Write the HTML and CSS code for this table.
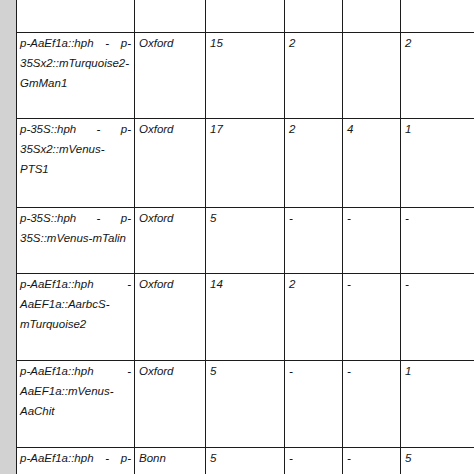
FILE: index.html
```html
<!DOCTYPE html>
<html>
<head>
<meta charset="utf-8">
<link rel="stylesheet" href="styles.css">
</head>
<body>
<div class="sheet">
  <div class="strip"></div>

  <div class="cell"></div><div class="cell"></div><div class="cell"></div><div class="cell"></div><div class="cell"></div><div class="cell"></div>

  <div class="cell name">p-AaEf1a::hph - p-35Sx2::mTurquoise2-GmMan1</div>
  <div class="cell">Oxford</div><div class="cell">15</div><div class="cell">2</div><div class="cell"></div><div class="cell">2</div>

  <div class="cell name">p-35S::hph - p-35Sx2::mVenus-PTS1</div>
  <div class="cell">Oxford</div><div class="cell">17</div><div class="cell">2</div><div class="cell">4</div><div class="cell">1</div>

  <div class="cell name">p-35S::hph - p-35S::mVenus-mTalin</div>
  <div class="cell">Oxford</div><div class="cell">5</div><div class="cell">-</div><div class="cell">-</div><div class="cell">-</div>

  <div class="cell name">p-AaEf1a::hph - AaEF1a::AarbcS-mTurquoise2</div>
  <div class="cell">Oxford</div><div class="cell">14</div><div class="cell">2</div><div class="cell">-</div><div class="cell">-</div>

  <div class="cell name">p-AaEf1a::hph - AaEF1a::mVenus-AaChit</div>
  <div class="cell">Oxford</div><div class="cell">5</div><div class="cell">-</div><div class="cell">-</div><div class="cell">1</div>

  <div class="cell name">p-AaEf1a::hph - p-35Sx2::mVenus-GmMan1</div>
  <div class="cell">Bonn</div><div class="cell">5</div><div class="cell">-</div><div class="cell">-</div><div class="cell">5</div>
</div>
</body>
</html>
```

FILE: styles.css
```css
html, body {
  margin: 0;
  padding: 0;
  background: #ffffff;
  overflow: hidden;
}

.sheet {
  display: grid;
  grid-template-columns: 16px 117px 70px 78px 57px 57px 100px;
  grid-template-rows: 32px 85px 88px 65px 86px 86px 60px;
  gap: 1px;
  background: #1c1c1c;
  width: 531px;
  font-family: "Liberation Sans", Arial, sans-serif;
  font-style: italic;
  font-size: 11.5px;
  line-height: 20px;
  color: #151515;
}

.strip {
  grid-column: 1;
  grid-row: 1 / -1;
  background: #d2d2d2;
}

.cell {
  background: #ffffff;
  padding: 0 3px 0 4px;
}

.name {
  padding: 0 3px 0 3px;
  text-align: justify;
}
```
